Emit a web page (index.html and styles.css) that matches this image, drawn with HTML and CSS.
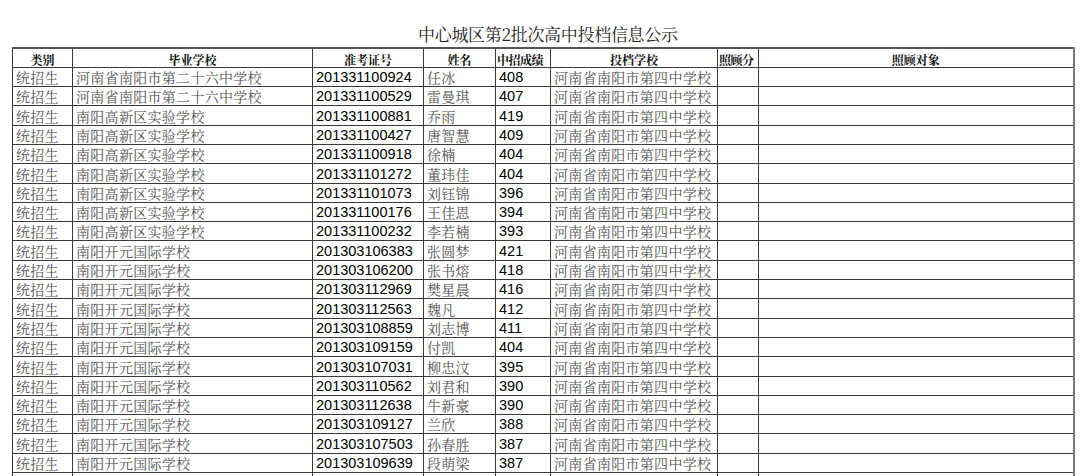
FILE: index.html
```html
<!DOCTYPE html>
<html lang="zh-CN">
<head>
<meta charset="utf-8">
<title>中心城区第2批次高中投档信息公示</title>
<link rel="stylesheet" href="styles.css">
</head>
<body>
<div class="page">
  <h1 class="title">中心城区第2批次高中投档信息公示</h1>
  <table class="sheet">
    <colgroup>
      <col class="c1"><col class="c2"><col class="c3"><col class="c4"><col class="c5"><col class="c6"><col class="c7"><col class="c8">
    </colgroup>
    <thead>
      <tr><th>类别</th><th>毕业学校</th><th>准考证号</th><th>姓名</th><th class="tight">中招成绩</th><th>投档学校</th><th class="tight">照顾分</th><th>照顾对象</th></tr>
    </thead>
    <tbody>
      <tr><td>统招生</td><td>河南省南阳市第二十六中学校</td><td class="num">201331100924</td><td>任冰</td><td class="num">408</td><td>河南省南阳市第四中学校</td><td></td><td></td></tr>
      <tr><td>统招生</td><td>河南省南阳市第二十六中学校</td><td class="num">201331100529</td><td>雷曼琪</td><td class="num">407</td><td>河南省南阳市第四中学校</td><td></td><td></td></tr>
      <tr><td>统招生</td><td>南阳高新区实验学校</td><td class="num">201331100881</td><td>乔雨</td><td class="num">419</td><td>河南省南阳市第四中学校</td><td></td><td></td></tr>
      <tr><td>统招生</td><td>南阳高新区实验学校</td><td class="num">201331100427</td><td>唐智慧</td><td class="num">409</td><td>河南省南阳市第四中学校</td><td></td><td></td></tr>
      <tr><td>统招生</td><td>南阳高新区实验学校</td><td class="num">201331100918</td><td>徐楠</td><td class="num">404</td><td>河南省南阳市第四中学校</td><td></td><td></td></tr>
      <tr><td>统招生</td><td>南阳高新区实验学校</td><td class="num">201331101272</td><td>董玮佳</td><td class="num">404</td><td>河南省南阳市第四中学校</td><td></td><td></td></tr>
      <tr><td>统招生</td><td>南阳高新区实验学校</td><td class="num">201331101073</td><td>刘钰锦</td><td class="num">396</td><td>河南省南阳市第四中学校</td><td></td><td></td></tr>
      <tr><td>统招生</td><td>南阳高新区实验学校</td><td class="num">201331100176</td><td>王佳恩</td><td class="num">394</td><td>河南省南阳市第四中学校</td><td></td><td></td></tr>
      <tr><td>统招生</td><td>南阳高新区实验学校</td><td class="num">201331100232</td><td>李若楠</td><td class="num">393</td><td>河南省南阳市第四中学校</td><td></td><td></td></tr>
      <tr><td>统招生</td><td>南阳开元国际学校</td><td class="num">201303106383</td><td>张圆梦</td><td class="num">421</td><td>河南省南阳市第四中学校</td><td></td><td></td></tr>
      <tr><td>统招生</td><td>南阳开元国际学校</td><td class="num">201303106200</td><td>张书熔</td><td class="num">418</td><td>河南省南阳市第四中学校</td><td></td><td></td></tr>
      <tr><td>统招生</td><td>南阳开元国际学校</td><td class="num">201303112969</td><td>樊星晨</td><td class="num">416</td><td>河南省南阳市第四中学校</td><td></td><td></td></tr>
      <tr><td>统招生</td><td>南阳开元国际学校</td><td class="num">201303112563</td><td>魏凡</td><td class="num">412</td><td>河南省南阳市第四中学校</td><td></td><td></td></tr>
      <tr><td>统招生</td><td>南阳开元国际学校</td><td class="num">201303108859</td><td>刘志博</td><td class="num">411</td><td>河南省南阳市第四中学校</td><td></td><td></td></tr>
      <tr><td>统招生</td><td>南阳开元国际学校</td><td class="num">201303109159</td><td>付凯</td><td class="num">404</td><td>河南省南阳市第四中学校</td><td></td><td></td></tr>
      <tr><td>统招生</td><td>南阳开元国际学校</td><td class="num">201303107031</td><td>柳忠汶</td><td class="num">395</td><td>河南省南阳市第四中学校</td><td></td><td></td></tr>
      <tr><td>统招生</td><td>南阳开元国际学校</td><td class="num">201303110562</td><td>刘君和</td><td class="num">390</td><td>河南省南阳市第四中学校</td><td></td><td></td></tr>
      <tr><td>统招生</td><td>南阳开元国际学校</td><td class="num">201303112638</td><td>牛新豪</td><td class="num">390</td><td>河南省南阳市第四中学校</td><td></td><td></td></tr>
      <tr><td>统招生</td><td>南阳开元国际学校</td><td class="num">201303109127</td><td>兰欣</td><td class="num">388</td><td>河南省南阳市第四中学校</td><td></td><td></td></tr>
      <tr><td>统招生</td><td>南阳开元国际学校</td><td class="num">201303107503</td><td>孙春胜</td><td class="num">387</td><td>河南省南阳市第四中学校</td><td></td><td></td></tr>
      <tr><td>统招生</td><td>南阳开元国际学校</td><td class="num">201303109639</td><td>段萌梁</td><td class="num">387</td><td>河南省南阳市第四中学校</td><td></td><td></td></tr>
      <tr><td></td><td></td><td></td><td></td><td></td><td></td><td></td><td></td></tr>
    </tbody>
  </table>
</div>
</body>
</html>
```

FILE: styles.css
```css
html, body {
  margin: 0;
  padding: 0;
  background: #fff;
}
body {
  width: 1080px;
  height: 476px;
  overflow: hidden;
}
.page {
  padding: 0 8px 0 12px;
}
.title {
  margin: 0;
  height: 47px;
  box-sizing: border-box;
  padding: 23px 0 0 406px;
  font-family: "Noto Serif CJK SC", "Noto Sans CJK SC", serif;
  font-weight: 400;
  font-size: 17px;
  line-height: 22px;
  color: #222;
  letter-spacing: -0.3px;
}
.sheet {
  border-collapse: collapse;
  table-layout: fixed;
  width: 1061px;
}
.c1 { width: 60px; }
.c2 { width: 240px; }
.c3 { width: 111px; }
.c4 { width: 72px; }
.c5 { width: 55px; }
.c6 { width: 167px; }
.c7 { width: 41px; }
.c8 { width: 315px; }
.sheet th, .sheet td {
  border: 1px solid #3a3a3a;
  height: 19.3px;
  padding: 0 0 0 3px;
  box-sizing: border-box;
  white-space: nowrap;
  overflow: hidden;
  vertical-align: bottom;
}
.sheet th {
  font-family: "Noto Serif CJK SC", "Noto Sans CJK SC", serif;
  font-weight: 700;
  font-size: 12px;
  line-height: 15px;
  color: #111;
  text-align: center;
  padding: 0;
  border-top: 2px solid #555;
}
.sheet th.tight {
  text-align: left;
  padding-left: 1px;
  letter-spacing: -0.5px;
}
.sheet td {
  font-family: "Noto Serif CJK SC", "Noto Sans CJK SC", serif;
  font-size: 14px;
  line-height: 17px;
  color: #555;
  letter-spacing: 0.3px;
}
.sheet td.num {
  font-family: "Liberation Sans", Arial, sans-serif;
  font-size: 14.5px;
  color: #000;
  letter-spacing: 0;
}
.sheet tr:first-child th:last-child,
.sheet td:last-child {
  border-right: 2px solid #777;
}
```
